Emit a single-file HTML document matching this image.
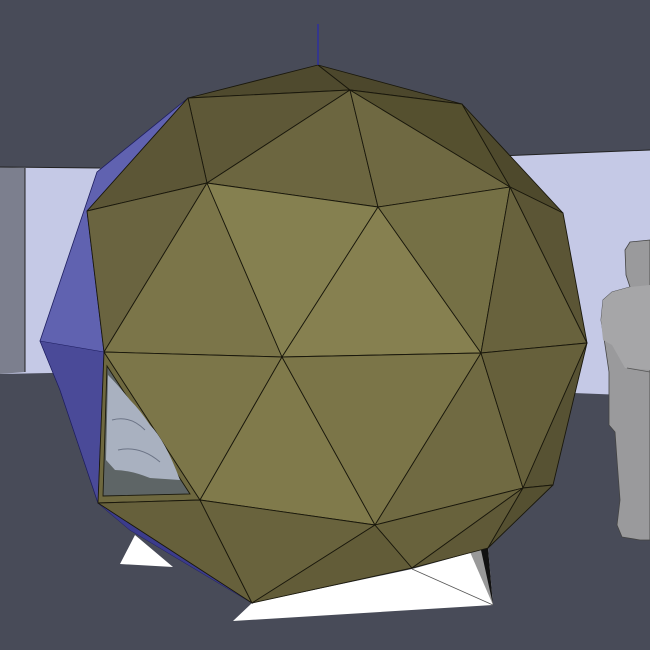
<!DOCTYPE html>
<html><head><meta charset="utf-8"><style>html,body{margin:0;padding:0;background:#484b58}svg{display:block}</style></head>
<body>
<svg width="650" height="650" viewBox="0 0 650 650" xmlns="http://www.w3.org/2000/svg">
<rect width="650" height="650" fill="#484b58"/>
<!-- walls -->
<polygon points="0,167 100,168 100,372 0,374" fill="#c5c9e6"/>
<polygon points="0,167 25,168 25,372 0,374" fill="#7c7f8e"/>
<line x1="25" y1="168" x2="25" y2="372" stroke="#222" stroke-width="1"/>
<polygon points="500,156 650,150 650,396 500,390" fill="#c5c9e6"/>
<line x1="0" y1="167" x2="100" y2="168" stroke="#222"/>
<line x1="500" y1="156" x2="650" y2="150" stroke="#222"/>
<!-- person -->
<path d="M625,250 L630,242 L650,240 L650,540 L640,540 L622,537 L617,525 L620,500 L617,460 L615,432 L609,425 L609,372 L605,345 L601,320 L603,300 L612,292 L630,287 L626,275 Z" fill="#9a9a9c" stroke="#444" stroke-width="0.8"/>
<path d="M612,292 L630,287 L650,285 L650,370 L625,368 L612,345 L603,340 L601,320 L603,300 Z" fill="#a6a6a8"/>
<line x1="627" y1="368" x2="650" y2="372" stroke="#555" stroke-width="0.8"/>
<!-- white bases -->
<polygon points="120,564 135,535 173,567" fill="#fff"/>
<polygon points="233,621 252,603 412,569 488,548 493,605" fill="#fff"/>
<polygon points="470,552 488,548 493,605" fill="#999"/>
<polygon points="481,550 488,548 493,605" fill="#111"/>
<line x1="412" y1="569" x2="493" y2="605" stroke="#555" stroke-width="0.7"/>
<!-- blue shell -->
<polygon points="188,98 97,172 40,341 60,390 98,503 130,530 252,603 200,500 104,352 87,211" fill="#6062b0" stroke="#1e1e60" stroke-width="0.8"/>
<polygon points="40,341 104,352 98,503 60,390" fill="#4a4a98" stroke="#1e1e60" stroke-width="0.6"/>
<polygon points="98,503 130,530 252,603 200,500" fill="#3c3c8c"/>
<!-- sphere faces -->
<g stroke="#1a180c" stroke-width="0.9" stroke-linejoin="round">
<polygon points="318,65 188,98 350,90" fill="#4f4a2e"/>
<polygon points="318,65 350,90 462,104" fill="#4c472c"/>
<polygon points="188,98 350,90 207,183" fill="#5e5837"/>
<polygon points="350,90 207,183 378,207" fill="#6c6640"/>
<polygon points="350,90 378,207 510,187" fill="#6f6942"/>
<polygon points="350,90 462,104 510,187" fill="#55502f"/>
<polygon points="462,104 510,187 563,213" fill="#4e492c"/>
<polygon points="188,98 87,211 207,183" fill="#5c5636"/>
<polygon points="87,211 207,183 104,352" fill="#6a6440"/>
<polygon points="207,183 104,352 282,357" fill="#7b7549"/>
<polygon points="207,183 378,207 282,357" fill="#858050"/>
<polygon points="378,207 282,357 481,353" fill="#868050"/>
<polygon points="378,207 510,187 481,353" fill="#757045"/>
<polygon points="510,187 481,353 587,343" fill="#68623d"/>
<polygon points="510,187 563,213 587,343" fill="#5b5535"/>
<polygon points="104,352 98,503 200,500" fill="#6e683f"/>
<polygon points="104,352 282,357 200,500" fill="#7c7649"/>
<polygon points="282,357 200,500 375,525" fill="#807a4b"/>
<polygon points="282,357 481,353 375,525" fill="#7b7548"/>
<polygon points="481,353 375,525 523,488" fill="#706a42"/>
<polygon points="481,353 523,488 587,343" fill="#66603b"/>
<polygon points="587,343 523,488 553,485" fill="#575233"/>
<polygon points="98,503 200,500 252,603" fill="#66603b"/>
<polygon points="200,500 252,603 375,525" fill="#69633d"/>
<polygon points="252,603 375,525 412,568" fill="#625c38"/>
<polygon points="375,525 412,568 523,488" fill="#68623c"/>
<polygon points="412,568 523,488 488,548" fill="#5f5937"/>
<polygon points="523,488 553,485 488,548" fill="#555031"/>
</g>
<!-- window -->
<polygon points="107,366 103,496 190,494" fill="#5e6566" stroke="#1a180c" stroke-width="0.9"/>
<path d="M108,375 Q118,385 130,400 Q140,410 150,425 Q165,440 180,480 L150,478 Q130,470 115,470 L106,460 Z" fill="#a9b1c0"/>
<path d="M112,420 Q130,415 145,430 M118,450 Q140,445 160,462" stroke="#6c7486" fill="none" stroke-width="1"/>
<line x1="318" y1="24" x2="318" y2="65" stroke="#2020c0" stroke-width="1"/>
</svg>
</body></html>
